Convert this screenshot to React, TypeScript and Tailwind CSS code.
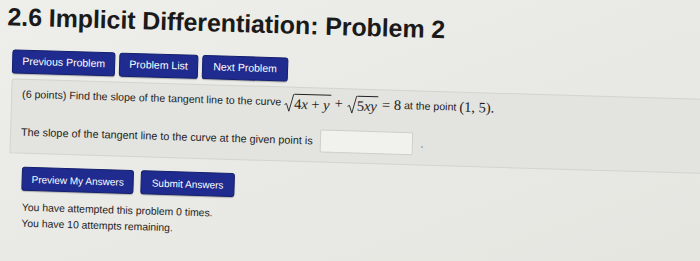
const sans = "font-['Liberation_Sans',Arial,sans-serif]";
const serif = "font-['Liberation_Serif','Times_New_Roman',serif]";

function Sqrt({ children }: { children: React.ReactNode }) {
  return (
    <span className="inline-flex items-stretch align-middle">
      <svg width="10" height="19" viewBox="0 0 10 19" className="shrink-0">
        <path d="M0.5 11 L2.4 10 L5 17.6 L9.4 0.6 L10 0.6" fill="none" stroke="#222" strokeWidth="0.9" />
      </svg>
      <span className="border-t-[0.9px] border-[#222] pt-[1px] pr-[1px] leading-[17px]">{children}</span>
    </span>
  );
}

function NavButton({ label, className = '' }: { label: string; className?: string }) {
  return (
    <button
      className={`h-[24px] rounded-[3px] border border-[#14206e] bg-[#1f2b8e] text-white shadow-[0_1px_1px_rgba(0,0,0,0.25)] ${className}`}
    >
      {label}
    </button>
  );
}

export default function App() {
  return (
    <div className={`relative h-[261px] w-[700px] overflow-hidden bg-gradient-to-br from-[#eeeeeb] via-[#e9e9e5] to-[#e6e6e1] ${sans}`}>
      <div className="w-[760px] origin-top-left rotate-[1.7deg] text-[#1d1d1d]">
        <h1 className="pl-[8px] pt-[1px] text-[25px] font-bold leading-[30px] tracking-[-0.1px] text-[#1a1a1a]">
          2.6 Implicit Differentiation: Problem 2
        </h1>

        <div className="mt-[18px] flex gap-[4px] pl-[14px] text-[10.5px]">
          <NavButton label="Previous Problem" className="w-[103px]" />
          <NavButton label="Problem List" className="w-[79px]" />
          <NavButton label="Next Problem" className="w-[86px]" />
        </div>

        <div className="ml-[14px] mt-[5px] h-[75px] rounded-tl-[3px] border border-[#d4d4cf] bg-[#e3e3df] pl-[10px] pt-[5px] text-[10.6px]">
          <div className="flex h-[20px] items-center">
            <span>(6 points) Find the slope of the tangent line to the curve&nbsp;</span>
            <span className={`${serif} flex items-center text-[14.5px]`}>
              <Sqrt>
                4<i>x</i> + <i>y</i>
              </Sqrt>
              <span className="px-[4px]">+</span>
              <Sqrt>
                5<i>xy</i>
              </Sqrt>
              <span className="pl-[4px]">=&nbsp;8</span>
            </span>
            <span>&nbsp;at the point&nbsp;</span>
            <span className={`${serif} text-[14.5px]`}>(1,&nbsp;5).</span>
          </div>

          <div className="mt-[16px] flex items-center">
            <span className="text-[10.8px]">The slope of the tangent line to the curve at the given point is</span>
            <span className="ml-[7px] h-[23px] w-[93px] rounded-[2px] border border-[#cfcfca] bg-[#f1f1ee]" />
            <span className="ml-[8px] text-[10px]">.</span>
          </div>
        </div>

        <div className="mt-[13px] flex gap-[7px] pl-[27px] text-[10px]">
          <NavButton label="Preview My Answers" className="w-[112px]" />
          <NavButton label="Submit Answers" className="w-[94px]" />
        </div>

        <div className="mt-[9px] pl-[28px] text-[10.4px] leading-[16px] text-[#222]">
          <p>You have attempted this problem 0 times.</p>
          <p>You have 10 attempts remaining.</p>
        </div>
      </div>
    </div>
  );
}
